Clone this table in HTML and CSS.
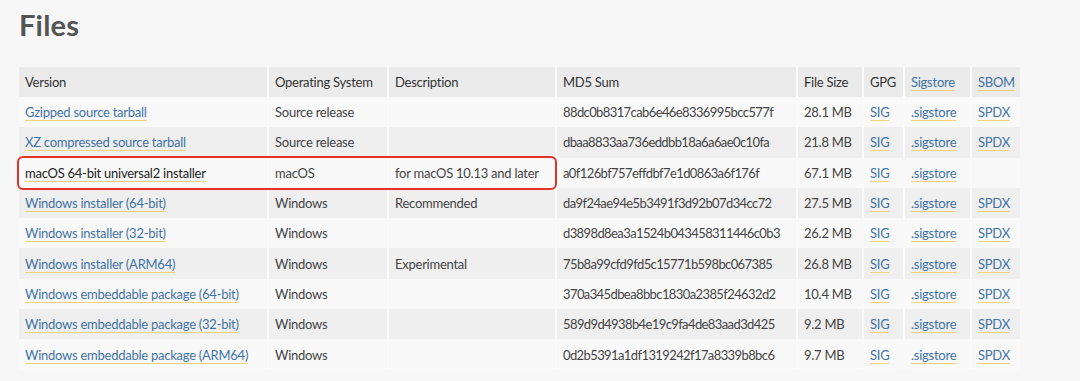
FILE: index.html
```html
<!DOCTYPE html>
<html lang="en">
<head>
<meta charset="utf-8">
<title>Files</title>
<link rel="stylesheet" href="styles.css">
</head>
<body>
<main class="page">
  <h2 class="title">Files</h2>
  <div class="table-wrap">
    <table class="files">
      <colgroup>
        <col class="c-version"><col class="c-os"><col class="c-desc"><col class="c-md5"><col class="c-size"><col class="c-gpg"><col class="c-sig"><col class="c-sbom">
      </colgroup>
      <thead>
        <tr><th>Version</th><th>Operating System</th><th>Description</th><th>MD5 Sum</th><th>File Size</th><th>GPG</th><th><a href="#">Sigstore</a></th><th><a href="#">SBOM</a></th></tr>
      </thead>
      <tbody>
        <tr><td><a href="#">Gzipped source tarball</a></td><td>Source release</td><td></td><td class="md5">88dc0b8317cab6e46e8336995bcc577f</td><td>28.1 MB</td><td><a href="#">SIG</a></td><td><a href="#">.sigstore</a></td><td><a href="#">SPDX</a></td></tr>
        <tr><td><a href="#">XZ compressed source tarball</a></td><td>Source release</td><td></td><td class="md5">dbaa8833aa736eddbb18a6a6ae0c10fa</td><td>21.8 MB</td><td><a href="#">SIG</a></td><td><a href="#">.sigstore</a></td><td><a href="#">SPDX</a></td></tr>
        <tr><td><a href="#" class="plain">macOS 64-bit universal2 installer</a></td><td>macOS</td><td>for macOS 10.13 and later</td><td class="md5">a0f126bf757effdbf7e1d0863a6f176f</td><td>67.1 MB</td><td><a href="#">SIG</a></td><td><a href="#">.sigstore</a></td><td></td></tr>
        <tr><td><a href="#">Windows installer (64-bit)</a></td><td>Windows</td><td>Recommended</td><td class="md5">da9f24ae94e5b3491f3d92b07d34cc72</td><td>27.5 MB</td><td><a href="#">SIG</a></td><td><a href="#">.sigstore</a></td><td><a href="#">SPDX</a></td></tr>
        <tr><td><a href="#">Windows installer (32-bit)</a></td><td>Windows</td><td></td><td class="md5">d3898d8ea3a1524b043458311446c0b3</td><td>26.2 MB</td><td><a href="#">SIG</a></td><td><a href="#">.sigstore</a></td><td><a href="#">SPDX</a></td></tr>
        <tr><td><a href="#">Windows installer (ARM64)</a></td><td>Windows</td><td>Experimental</td><td class="md5">75b8a99cfd9fd5c15771b598bc067385</td><td>26.8 MB</td><td><a href="#">SIG</a></td><td><a href="#">.sigstore</a></td><td><a href="#">SPDX</a></td></tr>
        <tr><td><a href="#">Windows embeddable package (64-bit)</a></td><td>Windows</td><td></td><td class="md5">370a345dbea8bbc1830a2385f24632d2</td><td>10.4 MB</td><td><a href="#">SIG</a></td><td><a href="#">.sigstore</a></td><td><a href="#">SPDX</a></td></tr>
        <tr><td><a href="#">Windows embeddable package (32-bit)</a></td><td>Windows</td><td></td><td class="md5">589d9d4938b4e19c9fa4de83aad3d425</td><td>9.2 MB</td><td><a href="#">SIG</a></td><td><a href="#">.sigstore</a></td><td><a href="#">SPDX</a></td></tr>
        <tr><td><a href="#">Windows embeddable package (ARM64)</a></td><td>Windows</td><td></td><td class="md5">0d2b5391a1df1319242f17a8339b8bc6</td><td>9.7 MB</td><td><a href="#">SIG</a></td><td><a href="#">.sigstore</a></td><td><a href="#">SPDX</a></td></tr>
      </tbody>
    </table>
    <div class="highlight" aria-hidden="true"></div>
  </div>
</main>
</body>
</html>
```

FILE: styles.css
```css
html, body {
  margin: 0;
  padding: 0;
  background: #f7f7f7;
}
body {
  font-family: "Lato", "Open Sans", "Liberation Sans", sans-serif;
  color: #444;
  width: 1080px;
  height: 381px;
  overflow: hidden;
}
.page {
  padding: 8px 0 0 19px;
}
.title {
  margin: 0;
  font-size: 29px;
  font-weight: 700;
  color: #545454;
  line-height: 34px;
  letter-spacing: 0.2px;
}
.table-wrap {
  position: relative;
  margin-top: 25px;
  width: 1001px;
}
.files {
  width: 1001px;
  table-layout: fixed;
  border-collapse: collapse;
  font-size: 13px;
  letter-spacing: -0.25px;
}
.c-version { width: 249px; }
.c-os { width: 120px; }
.c-desc { width: 168px; }
.c-md5 { width: 241px; }
.c-size { width: 66px; }
.c-gpg { width: 41px; }
.c-sig { width: 67px; }
.c-sbom { width: 49px; }
.files th,
.files td {
  text-align: left;
  padding: 0 0 0 6px;
  height: 30px;
  white-space: nowrap;
  overflow: hidden;
  border-left: 2px solid #fbfbfb;
}
.files th:first-child,
.files td:first-child {
  border-left: none;
}
.files th {
  background: #ebebeb;
  font-weight: 400;
  color: #333;
  height: 30px;
}
.files tbody td {
  height: 30.3px;
}
.files td.md5 {
  letter-spacing: -0.6px;
}
.files tbody tr:nth-child(odd) td { background: #f9f9f9; }
.files tbody tr:nth-child(even) td { background: #efefef; }
.files a {
  color: #3f73a8;
  text-decoration: underline;
  text-decoration-color: #f2d27a;
  text-decoration-thickness: 1px;
  text-underline-offset: 3px;
}
.files a.plain {
  color: #222;
}
.highlight {
  position: absolute;
  left: -2px;
  top: 89px;
  width: 536px;
  height: 30px;
  border: 2px solid #e2332b;
  border-radius: 6px;
  pointer-events: none;
}
```
